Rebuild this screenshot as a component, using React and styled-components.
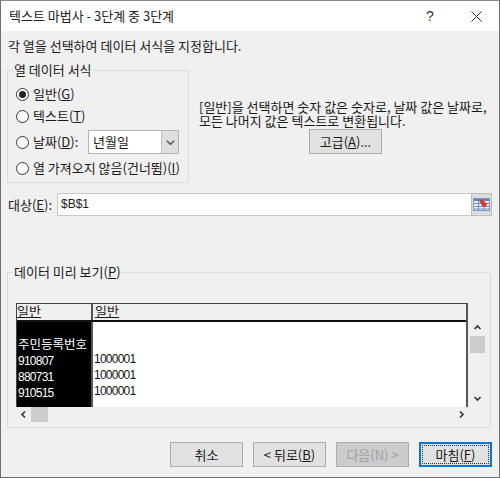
import React from 'react';
import styled, { createGlobalStyle } from 'styled-components';

const GlobalStyle = createGlobalStyle`
  html, body { margin: 0; padding: 0; background: #f0f0f0; }
  * { box-sizing: border-box; }
`;

const Window = styled.div`
  width: 500px;
  height: 478px;
  display: flex;
  flex-direction: column;
  background: #f0f0f0;
  border: 1px solid #6f6f6f;
  border-top-color: #8a8a8a;
  color: #1a1a1a;
  font-family: "Noto Sans CJK KR", "Noto Sans", sans-serif;
  font-size: 13px;
  line-height: 16px;
`;

const TitleBar = styled.div`
  height: 30px;
  flex: none;
  display: flex;
  align-items: center;
  background: #fff;
  padding: 0 0 0 8px;
  font-size: 13px;
  color: #222;
`;

const TitleText = styled.div`
  flex: 1;
`;

const TitleButton = styled.div`
  width: 46px;
  height: 30px;
  display: flex;
  align-items: center;
  justify-content: center;
  color: #333;
  font-family: "Liberation Sans", sans-serif;
  font-size: 14px;
`;

const Body = styled.div`
  flex: 1;
  display: flex;
  flex-direction: column;
  padding: 7px 7px 0 6px;
`;

const Instruction = styled.div`
  height: 16px;
  padding-left: 1px;
  white-space: nowrap;
`;

const TopRow = styled.div`
  display: flex;
`;

const Group = styled.fieldset`
  margin: 0;
  padding: 0;
  border: 1px solid #dcdcdc;
  min-width: 0;
`;

const FormatGroup = styled(Group)`
  width: 182px;
  height: 121px;
  flex: none;
  margin-top: 8px;
  padding: 5px 0 0 8px;
`;

const Legend = styled.legend`
  margin-left: -3px;
  padding: 0 1px;
  line-height: 16px;
  height: 16px;
  white-space: nowrap;
`;

const RadioRow = styled.div`
  display: flex;
  align-items: center;
  height: ${(p) => p.$h}px;
  white-space: nowrap;
`;

const RadioCircle = styled.span`
  width: 13px;
  height: 13px;
  flex: none;
  border-radius: 50%;
  border: 1px solid #333;
  background: #fff;
  margin-right: 4px;
  display: flex;
  align-items: center;
  justify-content: center;

  &::after {
    content: '';
    width: 7px;
    height: 7px;
    border-radius: 50%;
    background: ${(p) => (p.$checked ? '#222' : 'transparent')};
  }
`;

const Key = styled.span`
  text-decoration: underline;
  text-underline-offset: 1px;
`;

const DateLabel = styled.span`
  width: 55px;
  flex: none;
`;

const Combo = styled.div`
  width: 91px;
  height: 24px;
  display: flex;
  background: #fff;
  border: 1px solid #b4b4b4;
  padding-left: 4px;
  align-items: center;
`;

const ComboText = styled.div`
  flex: 1;
`;

const ComboArrow = styled.div`
  width: 17px;
  height: 22px;
  background: #dedede;
  border-left: 1px solid #c4c4c4;
  display: flex;
  align-items: center;
  justify-content: center;
`;

const HelpColumn = styled.div`
  flex: 1;
  display: flex;
  flex-direction: column;
  padding: 46px 0 0 10px;
`;

const HelpText = styled.div`
  line-height: 14px;
  white-space: nowrap;
`;

const AdvancedRow = styled.div`
  display: flex;
  padding-left: 110px;
  margin-top: 1px;
`;

const Button = styled.div`
  width: 73px;
  height: 25px;
  flex: none;
  display: flex;
  align-items: center;
  justify-content: center;
  white-space: nowrap;
  background: ${(p) => (p.$disabled ? '#cccccc' : '#e1e1e1')};
  color: ${(p) => (p.$disabled ? '#a0a0a0' : '#1a1a1a')};
  border: ${(p) => (p.$primary ? '2px solid #0078d7' : '1px solid #adadad')};
  position: relative;

  ${(p) =>
    p.$primary &&
    `&::after {
      content: '';
      position: absolute;
      inset: 1px;
      border: 1px dotted #333;
    }`}
`;

const TargetRow = styled.div`
  display: flex;
  align-items: center;
  height: 23px;
  margin-top: 10px;
  padding-left: 1px;
`;

const TargetLabel = styled.div`
  width: 49px;
  flex: none;
  white-space: nowrap;
`;

const TargetInput = styled.div`
  flex: 1;
  height: 23px;
  background: #fff;
  border: 1px solid #c8c8c8;
  border-right: none;
  padding: 2px 0 0 3px;
  font-family: "Liberation Sans", sans-serif;
  font-size: 12px;
`;

const PickerButton = styled.div`
  width: 21px;
  height: 23px;
  flex: none;
  background: #dcdcdc;
  border: 1px solid #bdbdbd;
  display: flex;
  align-items: center;
  justify-content: center;
`;

const PreviewGroup = styled(Group)`
  width: 484px;
  height: 164px;
  margin-top: 48px;
  padding: 23px 0 0 8px;
`;

const PreviewGrid = styled.div`
  display: grid;
  grid-template-columns: 452px 16px;
  grid-template-rows: 104px 15px;
  column-gap: 1px;
`;

const Table = styled.div`
  display: flex;
  flex-direction: column;
  border-top: 1px solid #444;
  border-left: 1px solid #444;
  border-right: 2px solid #555;
`;

const HeadRow = styled.div`
  height: 16px;
  flex: none;
  display: flex;
  border-bottom: 2px solid #111;
  box-sizing: content-box;
  background: #f0f0f0;
`;

const HeadCell = styled.div`
  width: ${(p) => p.$w}px;
  flex: ${(p) => (p.$w ? 'none' : '1')};
  border-right: ${(p) => (p.$w ? '2px solid #555' : 'none')};
  padding-left: ${(p) => (p.$w ? '0' : '2px')};
  line-height: 14px;
  text-decoration: underline;
`;

const Columns = styled.div`
  flex: 1;
  display: flex;
  background: #fff;
`;

const Column = styled.div`
  width: ${(p) => p.$w}px;
  flex: ${(p) => (p.$w ? 'none' : '1')};
  background: ${(p) => (p.$dark ? '#000' : '#fff')};
  color: ${(p) => (p.$dark ? '#fff' : '#111')};
  border-right: ${(p) => (p.$w ? '2px solid #555' : 'none')};
  padding-left: 1px;
`;

const Cell = styled.div`
  height: 16px;
  line-height: ${(p) => (p.$num ? '19px' : '16px')};
  white-space: nowrap;
  font-family: ${(p) => (p.$num ? '"Liberation Sans", sans-serif' : 'inherit')};
  font-size: ${(p) => (p.$num ? '12px' : '12.5px')};
  letter-spacing: ${(p) => (p.$num ? '-0.75px' : '0')};

  &:empty {
    height: 14px;
  }
`;

const VScroll = styled.div`
  display: flex;
  flex-direction: column;
  align-items: center;
  justify-content: space-between;
  padding: 20px 0 4px;
`;

const VThumb = styled.div`
  width: 15px;
  height: 17px;
  background: #cdcdcd;
  margin-top: 4px;
`;

const VTop = styled.div`
  display: flex;
  flex-direction: column;
  align-items: center;
`;

const HScroll = styled.div`
  display: flex;
  align-items: center;
  padding: 0 2px 0 3px;
`;

const HThumb = styled.div`
  width: 17px;
  height: 15px;
  background: #cdcdcd;
  margin-left: 3px;
`;

const Spacer = styled.div`
  flex: 1;
`;

const Footer = styled.div`
  display: flex;
  justify-content: flex-end;
  gap: 10px;
  margin-top: 14px;
`;

const Chevron = ({ dir = 'down', size = 9, color = '#333', weight = 1.6 }) => {
  const points = {
    down: '1.5,3 4.5,6 7.5,3',
    up: '1.5,6 4.5,3 7.5,6',
    left: '6,1.5 3,4.5 6,7.5',
    right: '3,1.5 6,4.5 3,7.5',
  }[dir];
  return (
    <svg width={size} height={size} viewBox="0 0 9 9">
      <polyline points={points} fill="none" stroke={color} strokeWidth={weight} />
    </svg>
  );
};

const PickerIcon = () => (
  <svg width="17" height="15" viewBox="0 0 17 15">
    <rect x="0.5" y="1.5" width="16" height="12" fill="#e8f0f8" stroke="#7f9db9" />
    <path d="M1 6.5h15M1 9.5h15M1 12h15M5.5 2v11M11 2v11" stroke="#6f93c4" fill="none" />
    <rect x="1" y="2" width="15" height="2" fill="#5b86bd" />
    <path d="M6 3.5l3-1 5 4.5-1.5 3-3-.5z" fill="#e2342c" />
  </svg>
);

const rows1 = ['', '주민등록번호', '910807', '880731', '910515'];
const rows2 = ['', '', '1000001', '1000001', '1000001'];

const App = () => {
  return (
    <Window>
      <GlobalStyle />
      <TitleBar>
        <TitleText>텍스트 마법사 - 3단계 중 3단계</TitleText>
        <TitleButton>?</TitleButton>
        <TitleButton>
          <svg width="11" height="11" viewBox="0 0 11 11">
            <path d="M0.5 0.5l10 10M10.5 0.5l-10 10" stroke="#333" fill="none" />
          </svg>
        </TitleButton>
      </TitleBar>
      <Body>
        <Instruction>각 열을 선택하여 데이터 서식을 지정합니다.</Instruction>
        <TopRow>
          <FormatGroup>
            <Legend>열 데이터 서식</Legend>
            <RadioRow $h={22}>
              <RadioCircle $checked />
              <span>일반(<Key>G</Key>)</span>
            </RadioRow>
            <RadioRow $h={22}>
              <RadioCircle />
              <span>텍스트(<Key>T</Key>)</span>
            </RadioRow>
            <RadioRow $h={30}>
              <RadioCircle />
              <DateLabel>날짜(<Key>D</Key>):</DateLabel>
              <Combo>
                <ComboText>년월일</ComboText>
                <ComboArrow>
                  <Chevron size={11} color="#555" weight={1.2} />
                </ComboArrow>
              </Combo>
            </RadioRow>
            <RadioRow $h={22}>
              <RadioCircle />
              <span>열 가져오지 않음(건너뜀)(<Key>I</Key>)</span>
            </RadioRow>
          </FormatGroup>
          <HelpColumn>
            <HelpText>[일반]을 선택하면 숫자 값은 숫자로, 날짜 값은 날짜로,</HelpText>
            <HelpText>모든 나머지 값은 텍스트로 변환됩니다.</HelpText>
            <AdvancedRow>
              <Button>고급(<Key>A</Key>)...</Button>
            </AdvancedRow>
          </HelpColumn>
        </TopRow>
        <TargetRow>
          <TargetLabel>대상(<Key>E</Key>):</TargetLabel>
          <TargetInput>$B$1</TargetInput>
          <PickerButton>
            <PickerIcon />
          </PickerButton>
        </TargetRow>
        <PreviewGroup>
          <Legend>데이터 미리 보기(<Key>P</Key>)</Legend>
          <PreviewGrid>
            <Table>
              <HeadRow>
                <HeadCell $w={76}>일반</HeadCell>
                <HeadCell>일반</HeadCell>
              </HeadRow>
              <Columns>
                <Column $w={76} $dark>
                  {rows1.map((text, i) => (
                    <Cell key={i} $num={i > 1}>{text}</Cell>
                  ))}
                </Column>
                <Column>
                  {rows2.map((text, i) => (
                    <Cell key={i} $num>{text}</Cell>
                  ))}
                </Column>
              </Columns>
            </Table>
            <VScroll>
              <VTop>
                <Chevron dir="up" />
                <VThumb />
              </VTop>
              <Chevron dir="down" />
            </VScroll>
            <HScroll>
              <Chevron dir="left" />
              <HThumb />
              <Spacer />
              <Chevron dir="right" />
            </HScroll>
          </PreviewGrid>
        </PreviewGroup>
        <Footer>
          <Button>취소</Button>
          <Button>&lt; 뒤로(<Key>B</Key>)</Button>
          <Button $disabled>다음(N) &gt;</Button>
          <Button $primary>마침(<Key>F</Key>)</Button>
        </Footer>
      </Body>
    </Window>
  );
};

export default App;
